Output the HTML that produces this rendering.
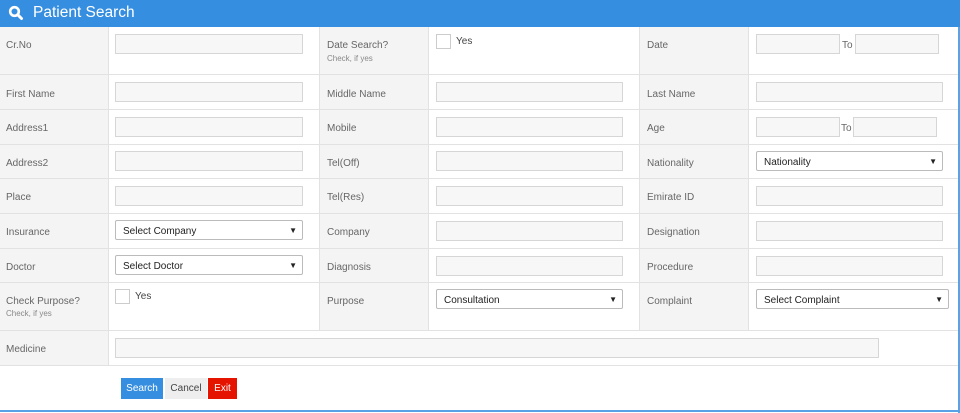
<!DOCTYPE html><html><head><style>
*{box-sizing:border-box;margin:0;padding:0}
body{width:960px;height:413px;background:#fff;font-family:"Liberation Sans",sans-serif;position:relative;overflow:hidden;font-size:10px;color:#555}
.a{position:absolute}
.hd{left:0;top:0;width:960px;height:27px;background:#368ee0;color:#fff;font-size:15.5px}
.lb{background:#f4f4f4}
.hl{height:1px;background:#e2e2e2;left:0;width:958px}
.vl{width:1px;background:#e2e2e2}
.in{background:#f7f7f7;border:1px solid #d6d6d6;height:20px}
.sel{background:#fff;border:1px solid #bbb;height:20px;font-size:10px;color:#222;padding:5px 7px 0;border-radius:2px}
.sel:after{content:"▼";position:absolute;right:5px;top:5px;font-size:8px}
.t{font-size:10px;color:#666;margin-top:1px}
.s{font-size:8px;color:#888}
.cb{width:15px;height:15px;border:1px solid #ccc;background:#fff}
</style></head><body>
<div class="a hd"><svg class="a" style="left:8px;top:5px" width="16" height="16" viewBox="0 0 16 16"><circle cx="6.5" cy="6.5" r="4.3" fill="none" stroke="#fff" stroke-width="2.6"/><path d="M9.8 9.8L13.5 13.5" stroke="#fff" stroke-width="3" stroke-linecap="round"/></svg><span class="a" style="left:33px;top:4px">Patient Search</span></div>
<div class="a lb" style="left:0;top:27px;width:108px;height:338px"></div>
<div class="a lb" style="left:319px;top:27px;width:109px;height:303px"></div>
<div class="a lb" style="left:639px;top:27px;width:109px;height:303px"></div>
<div class="a hl" style="top:74px"></div><div class="a hl" style="top:109px"></div><div class="a hl" style="top:144px"></div><div class="a hl" style="top:178px"></div><div class="a hl" style="top:213px"></div><div class="a hl" style="top:248px"></div><div class="a hl" style="top:282px"></div><div class="a hl" style="top:330px"></div><div class="a hl" style="top:365px"></div>
<div class="a vl" style="left:108px;top:27px;height:338px"></div>
<div class="a vl" style="left:319px;top:27px;height:303px"></div><div class="a vl" style="left:428px;top:27px;height:303px"></div>
<div class="a vl" style="left:639px;top:27px;height:303px"></div><div class="a vl" style="left:748px;top:27px;height:303px"></div>
<div class="a" style="left:958px;top:27px;width:2px;height:386px;background:#5aa2e6"></div>
<div class="a" style="left:0;top:410px;width:960px;height:2px;background:#5aa2e6"></div>
<div class="a t" style="left:6px;top:39px">Cr.No</div>
<div class="a t" style="left:327px;top:39px">Date Search?</div><div class="a s" style="left:327px;top:54px">Check, if yes</div>
<div class="a t" style="left:647px;top:39px">Date</div>
<div class="a t" style="left:6px;top:88px">First Name</div><div class="a t" style="left:327px;top:88px">Middle Name</div><div class="a t" style="left:647px;top:88px">Last Name</div>
<div class="a t" style="left:6px;top:122px">Address1</div><div class="a t" style="left:327px;top:122px">Mobile</div><div class="a t" style="left:647px;top:122px">Age</div>
<div class="a t" style="left:6px;top:157px">Address2</div><div class="a t" style="left:327px;top:157px">Tel(Off)</div><div class="a t" style="left:647px;top:157px">Nationality</div>
<div class="a t" style="left:6px;top:191px">Place</div><div class="a t" style="left:327px;top:191px">Tel(Res)</div><div class="a t" style="left:647px;top:191px">Emirate ID</div>
<div class="a t" style="left:6px;top:226px">Insurance</div><div class="a t" style="left:327px;top:226px">Company</div><div class="a t" style="left:647px;top:226px">Designation</div>
<div class="a t" style="left:6px;top:261px">Doctor</div><div class="a t" style="left:327px;top:261px">Diagnosis</div><div class="a t" style="left:647px;top:261px">Procedure</div>
<div class="a t" style="left:6px;top:295px">Check Purpose?</div><div class="a s" style="left:6px;top:309px">Check, if yes</div>
<div class="a t" style="left:327px;top:295px">Purpose</div><div class="a t" style="left:647px;top:295px">Complaint</div>
<div class="a t" style="left:6px;top:343px">Medicine</div>
<div class="a in" style="left:115px;top:34px;width:188px"></div>
<div class="a cb" style="left:436px;top:34px"></div><div class="a t" style="left:456px;top:35px;color:#444">Yes</div>
<div class="a in" style="left:756px;top:34px;width:84px"></div><div class="a t" style="left:842px;top:39px">To</div><div class="a in" style="left:855px;top:34px;width:84px"></div>
<div class="a in" style="left:115px;top:82px;width:188px"></div><div class="a in" style="left:436px;top:82px;width:187px"></div><div class="a in" style="left:756px;top:82px;width:187px"></div>
<div class="a in" style="left:115px;top:117px;width:188px"></div><div class="a in" style="left:436px;top:117px;width:187px"></div>
<div class="a in" style="left:756px;top:117px;width:84px"></div><div class="a t" style="left:841px;top:122px">To</div><div class="a in" style="left:853px;top:117px;width:84px"></div>
<div class="a in" style="left:115px;top:151px;width:188px"></div><div class="a in" style="left:436px;top:151px;width:187px"></div><div class="a sel" style="left:756px;top:151px;width:187px">Nationality</div>
<div class="a in" style="left:115px;top:186px;width:188px"></div><div class="a in" style="left:436px;top:186px;width:187px"></div><div class="a in" style="left:756px;top:186px;width:187px"></div>
<div class="a sel" style="left:115px;top:220px;width:188px">Select Company</div><div class="a in" style="left:436px;top:221px;width:187px"></div><div class="a in" style="left:756px;top:221px;width:187px"></div>
<div class="a sel" style="left:115px;top:255px;width:188px">Select Doctor</div><div class="a in" style="left:436px;top:256px;width:187px"></div><div class="a in" style="left:756px;top:256px;width:187px"></div>
<div class="a cb" style="left:115px;top:289px"></div><div class="a t" style="left:135px;top:290px;color:#444">Yes</div>
<div class="a sel" style="left:436px;top:289px;width:187px">Consultation</div><div class="a sel" style="left:756px;top:289px;width:193px">Select Complaint</div>
<div class="a in" style="left:115px;top:338px;width:764px"></div>
<div class="a" style="left:121px;top:378px;width:42px;height:21px;background:#368ee0;color:#fff;text-align:center;line-height:21px">Search</div>
<div class="a" style="left:165px;top:378px;width:42px;height:21px;background:#eee;color:#444;text-align:center;line-height:21px">Cancel</div>
<div class="a" style="left:208px;top:378px;width:29px;height:21px;background:#e51400;color:#fff;text-align:center;line-height:21px">Exit</div>
</body></html>
